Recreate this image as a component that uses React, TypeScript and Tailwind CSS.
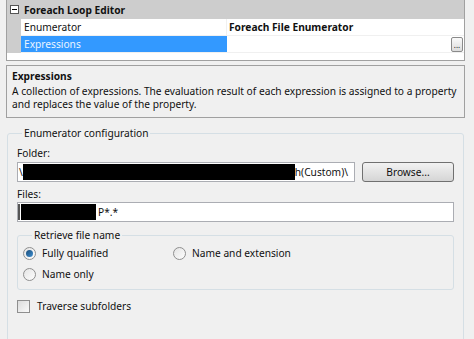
import React from "react"

function Radio({ checked, label }: { checked?: boolean; label: string }) {
  return (
    <div className="flex items-center gap-[6px]">
      <span className="flex h-[13px] w-[13px] items-center justify-center rounded-full border border-[#8f8f8f] bg-gradient-to-br from-[#e4e4e4] to-[#fdfdfd]">
        {checked && (
          <span className="h-[7px] w-[7px] rounded-full bg-gradient-to-br from-[#1b4d7a] to-[#3e8fd1]" />
        )}
      </span>
      <span>{label}</span>
    </div>
  )
}

export default function App() {
  return (
    <div
      className="h-[339px] w-[474px] overflow-hidden bg-[#f0f0f0] text-[10.2px] leading-[14px] text-[#111]"
      style={{ fontFamily: '"Noto Sans", "Open Sans", sans-serif' }}
    >
      {/* Property grid */}
      <div className="ml-[6px] mr-[9px] border-x border-b border-[#a0a0a0] bg-white">
        {/* Category header */}
        <div className="flex h-[19px] items-center bg-[#cdcdcd]">
          <span className="ml-[3px] flex h-[9px] w-[9px] items-center justify-center border border-[#555] bg-white">
            <span className="h-px w-[5px] bg-black" />
          </span>
          <span className="ml-[5px] font-bold">Foreach Loop Editor</span>
        </div>
        {/* Rows */}
        <div className="flex">
          <div className="w-[14px] bg-[#cdcdcd]" />
          <div className="flex-1">
            <div className="flex h-[17px] border-b border-[#f0f0f0]">
              <div className="flex w-[206px] items-center border-r border-[#f0f0f0] pl-[3px]">
                Enumerator
              </div>
              <div className="flex flex-1 items-center pl-[2px] font-bold">
                Foreach File Enumerator
              </div>
            </div>
            <div className="flex h-[17px] border-b border-[#f0f0f0]">
              <div className="flex w-[206px] items-center bg-[#3399ff] pl-[3px] text-[#eaf4ff]">
                Expressions
              </div>
              <div className="flex flex-1 items-center justify-end pr-[1px]">
                <span className="flex h-[15px] w-[12px] items-end justify-center rounded-[2px] border border-[#8a8a8a] bg-gradient-to-b from-[#fafafa] to-[#dcdcdc] pb-[3px] text-[8px] leading-[6px]">
                  ...
                </span>
              </div>
            </div>
          </div>
        </div>
        <div className="h-[7px]" />
      </div>

      {/* Description */}
      <div className="ml-[6px] mr-[9px] mt-[4px] h-[53px] border border-[#a0a0a0] px-[5px] pt-[3px]">
        <div className="font-bold">Expressions</div>
        <div className="mt-[2px] leading-[13px]">
          A collection of expressions. The evaluation result of each expression is assigned to a property
          and replaces the value of the property.
        </div>
      </div>

      {/* Enumerator configuration */}
      <fieldset className="ml-[7px] mr-[10px] mt-[8px] h-[240px] rounded-[3px] border border-[#d5dfe5] px-[9px]">
        <legend className="ml-[5px] px-[2px]">Enumerator configuration</legend>
        <div className="mt-[6px]">Folder:</div>
        <div className="mt-[2px] flex gap-[7px]">
          <div className="flex h-[20px] w-[338px] items-center overflow-hidden whitespace-nowrap border border-[#abadb3] bg-white pl-[1px]">
            <span>\</span>
            <span className="h-[16px] w-[272px] bg-black" />
            <span>h(Custom)\</span>
          </div>
          <button className="flex h-[20px] w-[92px] items-center justify-center rounded-[3px] border border-[#707070] bg-gradient-to-b from-[#f2f2f2] to-[#d5d5d5]">
            Browse...
          </button>
        </div>
        <div className="mt-[5px]">Files:</div>
        <div className="mt-[1px] flex h-[20px] w-[437px] items-center overflow-hidden whitespace-nowrap border border-[#abadb3] bg-white">
          <span className="h-[16px] w-[2px] bg-[#555]" />
          <span className="ml-[1px] h-[16px] w-[75px] bg-black" />
          <span className="ml-[2px]">P*.*</span>
        </div>

        <fieldset className="mt-[6px] h-[62px] w-[437px] rounded-[3px] border border-[#d5dfe5] px-[5px]">
          <legend className="ml-[9px] px-[2px]">Retrieve file name</legend>
          <div className="mt-[4px] flex">
            <div className="w-[150px]">
              <Radio checked label="Fully qualified" />
            </div>
            <Radio label="Name and extension" />
          </div>
          <div className="mt-[7px]">
            <Radio label="Name only" />
          </div>
        </fieldset>

        <div className="mt-[9px] flex items-center gap-[7px]">
          <span className="h-[13px] w-[13px] border border-[#8f8f8f] bg-gradient-to-br from-[#dcdcdc] to-[#fafafa]" />
          <span>Traverse subfolders</span>
        </div>
      </fieldset>
    </div>
  )
}
